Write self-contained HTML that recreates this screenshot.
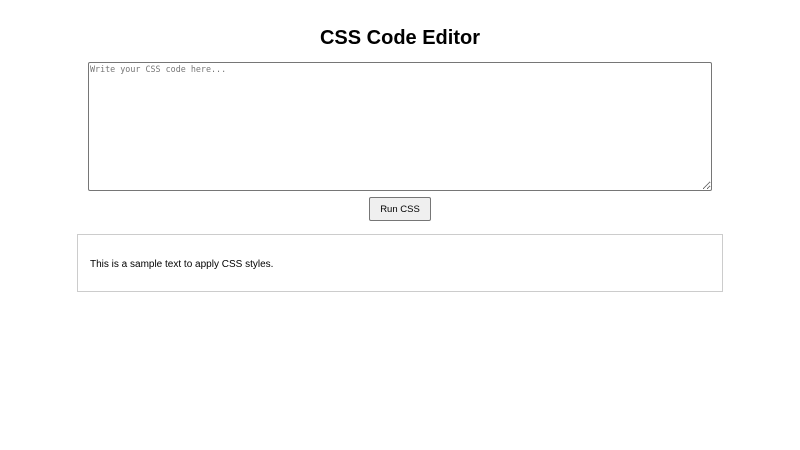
<!DOCTYPE html>
<html><head><style>
body{margin:0;width:800px;height:450px;background:#fff;font-family:"Liberation Sans",sans-serif;position:relative}
h1{position:absolute;top:23px;left:0;width:800px;text-align:center;margin:0;font-size:20px;font-weight:bold;line-height:30px;color:#000}
textarea{position:absolute;left:88px;top:62px;width:624px;height:129px;box-sizing:border-box;border:1px solid #767676;border-radius:2px;padding:1px 1px;font-family:"DejaVu Sans Mono",monospace;font-size:8.4px;resize:vertical;margin:0}
textarea::placeholder{color:#777}
button{position:absolute;left:369px;top:197px;width:62px;height:24px;box-sizing:border-box;border:1px solid #767676;border-radius:2px;background:#efefef;font-family:"Liberation Sans",sans-serif;font-size:9.5px;color:#000;padding:0}
.out{position:absolute;left:77px;top:234px;width:646px;height:58px;box-sizing:border-box;border:1px solid #ccc;padding:0 12px;font-size:10px;line-height:60px;color:#000}
</style></head><body>
<h1>CSS Code Editor</h1>
<textarea placeholder="Write your CSS code here..."></textarea>
<button>Run CSS</button>
<div class="out">This is a sample text to apply CSS styles.</div>
</body></html>
